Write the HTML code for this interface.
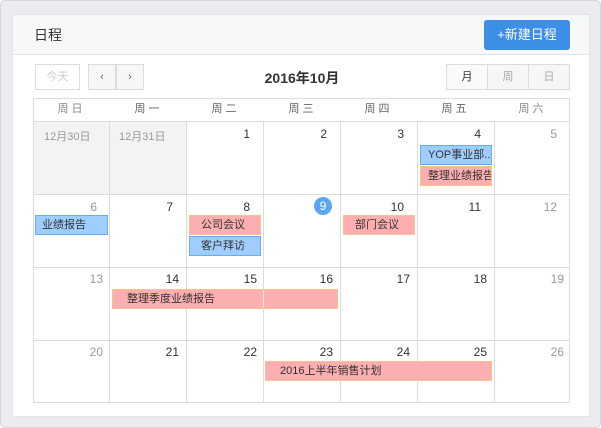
<!DOCTYPE html>
<html><head><meta charset="utf-8"><style>
*{box-sizing:border-box;margin:0;padding:0}
body{width:601px;height:428px;background:#fff;font-family:"Liberation Sans","Noto Sans CJK SC",sans-serif;position:relative;overflow:hidden;color:#333}
.frame{position:absolute;left:0;top:0;width:601px;height:428px;background:#ebecef;border:1px solid #d6d7da;border-radius:5px}
.card{position:absolute;left:12px;top:14px;width:578px;height:403px;background:#fff;border:1px solid #e3e4e7}
.hd{position:absolute;left:12px;top:14px;width:578px;height:41px;background:#f7f8fa;border:1px solid #e3e4e7}
.abs{position:absolute}
.btn{position:absolute;border:1px solid #dcdcdc;background:#f6f6f6;font-size:11px;text-align:center;line-height:24px;color:#bbb}
.ln{position:absolute;background:#dcdcdc}
.num{position:absolute;font-size:12px;width:70px;text-align:right}
.ev{position:absolute;font-size:11px;line-height:18px;color:#333;padding-left:6px;white-space:nowrap;overflow:hidden}
.bl{background:#9fcdfd;border:1px solid #66aef2}
.pk{background:#fcaeb0;border:1px solid #f8c28a}
.wd{position:absolute;top:98px;height:23px;line-height:23px;font-size:11px;text-align:center;width:77px;color:#666;letter-spacing:3px}
</style></head><body>
<div class="frame"></div>
<div class="card"></div>
<div class="hd"></div>
<div class="abs" style="left:34px;top:25px;font-size:14px;color:#333">日程</div>
<div class="abs" style="left:484px;top:20px;width:86px;height:30px;background:#3d8ee6;border-radius:3px;color:#fff;font-size:13px;line-height:30px;text-align:center">+新建日程</div>

<div class="btn" style="left:35px;top:64px;width:45px;height:26px;background:#fff;color:#ccc">今天</div>
<div class="btn" style="left:88px;top:64px;width:28px;height:26px;color:#666">&lsaquo;</div>
<div class="btn" style="left:116px;top:64px;width:28px;height:26px;color:#666">&rsaquo;</div>
<div class="abs" style="left:240px;top:68px;width:124px;text-align:center;font-size:14px;font-weight:bold;color:#333">2016年10月</div>
<div class="btn" style="left:446px;top:64px;width:42px;height:26px;background:#fafafa;color:#333">月</div>
<div class="btn" style="left:487px;top:64px;width:42px;height:26px;color:#aaa">周</div>
<div class="btn" style="left:528px;top:64px;width:42px;height:26px;color:#aaa">日</div>

<div class="abs" style="left:34px;top:122px;width:152px;height:72px;background:#f3f3f3"></div>

<div class="wd" style="left:33px;color:#888">周日</div>
<div class="wd" style="left:110px">周一</div>
<div class="wd" style="left:187px">周二</div>
<div class="wd" style="left:264px">周三</div>
<div class="wd" style="left:340px">周四</div>
<div class="wd" style="left:417px">周五</div>
<div class="wd" style="left:494px;color:#888">周六</div>

<!-- grid lines -->
<div class="ln" style="left:33px;top:98px;width:537px;height:1px"></div>
<div class="ln" style="left:33px;top:121px;width:537px;height:1px"></div>
<div class="ln" style="left:33px;top:194px;width:537px;height:1px"></div>
<div class="ln" style="left:33px;top:267px;width:537px;height:1px"></div>
<div class="ln" style="left:33px;top:340px;width:537px;height:1px"></div>
<div class="ln" style="left:33px;top:402px;width:537px;height:1px"></div>
<div class="ln" style="left:33px;top:98px;width:1px;height:305px"></div>
<div class="ln" style="left:109px;top:121px;width:1px;height:282px"></div>
<div class="ln" style="left:186px;top:121px;width:1px;height:282px"></div>
<div class="ln" style="left:263px;top:121px;width:1px;height:282px"></div>
<div class="ln" style="left:340px;top:121px;width:1px;height:282px"></div>
<div class="ln" style="left:417px;top:121px;width:1px;height:282px"></div>
<div class="ln" style="left:494px;top:121px;width:1px;height:282px"></div>
<div class="ln" style="left:569px;top:98px;width:1px;height:305px"></div>

<!-- events -->
<div class="ev bl" style="left:420px;top:145px;width:72px;height:20px;padding-left:7px">YOP事业部...</div>
<div class="ev pk" style="left:420px;top:166px;width:72px;height:20px;padding-left:7px">整理业绩报告</div>
<div class="ev bl" style="left:35px;top:215px;width:73px;height:20px">业绩报告</div>
<div class="ev pk" style="left:189px;top:215px;width:72px;height:20px;padding-left:11px">公司会议</div>
<div class="ev bl" style="left:189px;top:236px;width:72px;height:20px;padding-left:11px">客户拜访</div>
<div class="ev pk" style="left:343px;top:215px;width:72px;height:20px;padding-left:11px">部门会议</div>
<div class="ev pk" style="left:112px;top:289px;width:226px;height:20px;padding-left:14px">整理季度业绩报告</div>
<div class="ln" style="left:263px;top:290px;width:1px;height:18px;background:#e6e6e6"></div>
<div class="ev pk" style="left:265px;top:361px;width:227px;height:20px;padding-left:14px">2016上半年销售计划</div>

<!-- numbers -->
<div class="abs" style="left:44px;top:128px;font-size:11px;color:#999">12月30日</div>
<div class="abs" style="left:119px;top:128px;font-size:11px;color:#999">12月31日</div>
<div class="num" style="left:180px;top:127px">1</div>
<div class="num" style="left:257px;top:127px">2</div>
<div class="num" style="left:334px;top:127px">3</div>
<div class="num" style="left:411px;top:127px">4</div>
<div class="num" style="left:487px;top:127px;color:#999">5</div>

<div class="num" style="left:27px;top:200px;color:#999">6</div>
<div class="num" style="left:103px;top:200px">7</div>
<div class="num" style="left:180px;top:200px">8</div>
<div class="abs" style="left:314px;top:197px;width:18px;height:18px;border-radius:50%;background:#5aa6f5;color:#fff;font-size:12px;text-align:center;line-height:18px">9</div>
<div class="num" style="left:334px;top:200px">10</div>
<div class="num" style="left:411px;top:200px">11</div>
<div class="num" style="left:487px;top:200px;color:#999">12</div>

<div class="num" style="left:33px;top:272px;color:#999">13</div>
<div class="num" style="left:109px;top:272px">14</div>
<div class="num" style="left:187px;top:272px">15</div>
<div class="num" style="left:263px;top:272px">16</div>
<div class="num" style="left:340px;top:272px">17</div>
<div class="num" style="left:417px;top:272px">18</div>
<div class="num" style="left:494px;top:272px;color:#999">19</div>

<div class="num" style="left:33px;top:345px;color:#999">20</div>
<div class="num" style="left:109px;top:345px">21</div>
<div class="num" style="left:187px;top:345px">22</div>
<div class="num" style="left:263px;top:345px">23</div>
<div class="num" style="left:340px;top:345px">24</div>
<div class="num" style="left:417px;top:345px">25</div>
<div class="num" style="left:494px;top:345px;color:#999">26</div>
</body></html>
